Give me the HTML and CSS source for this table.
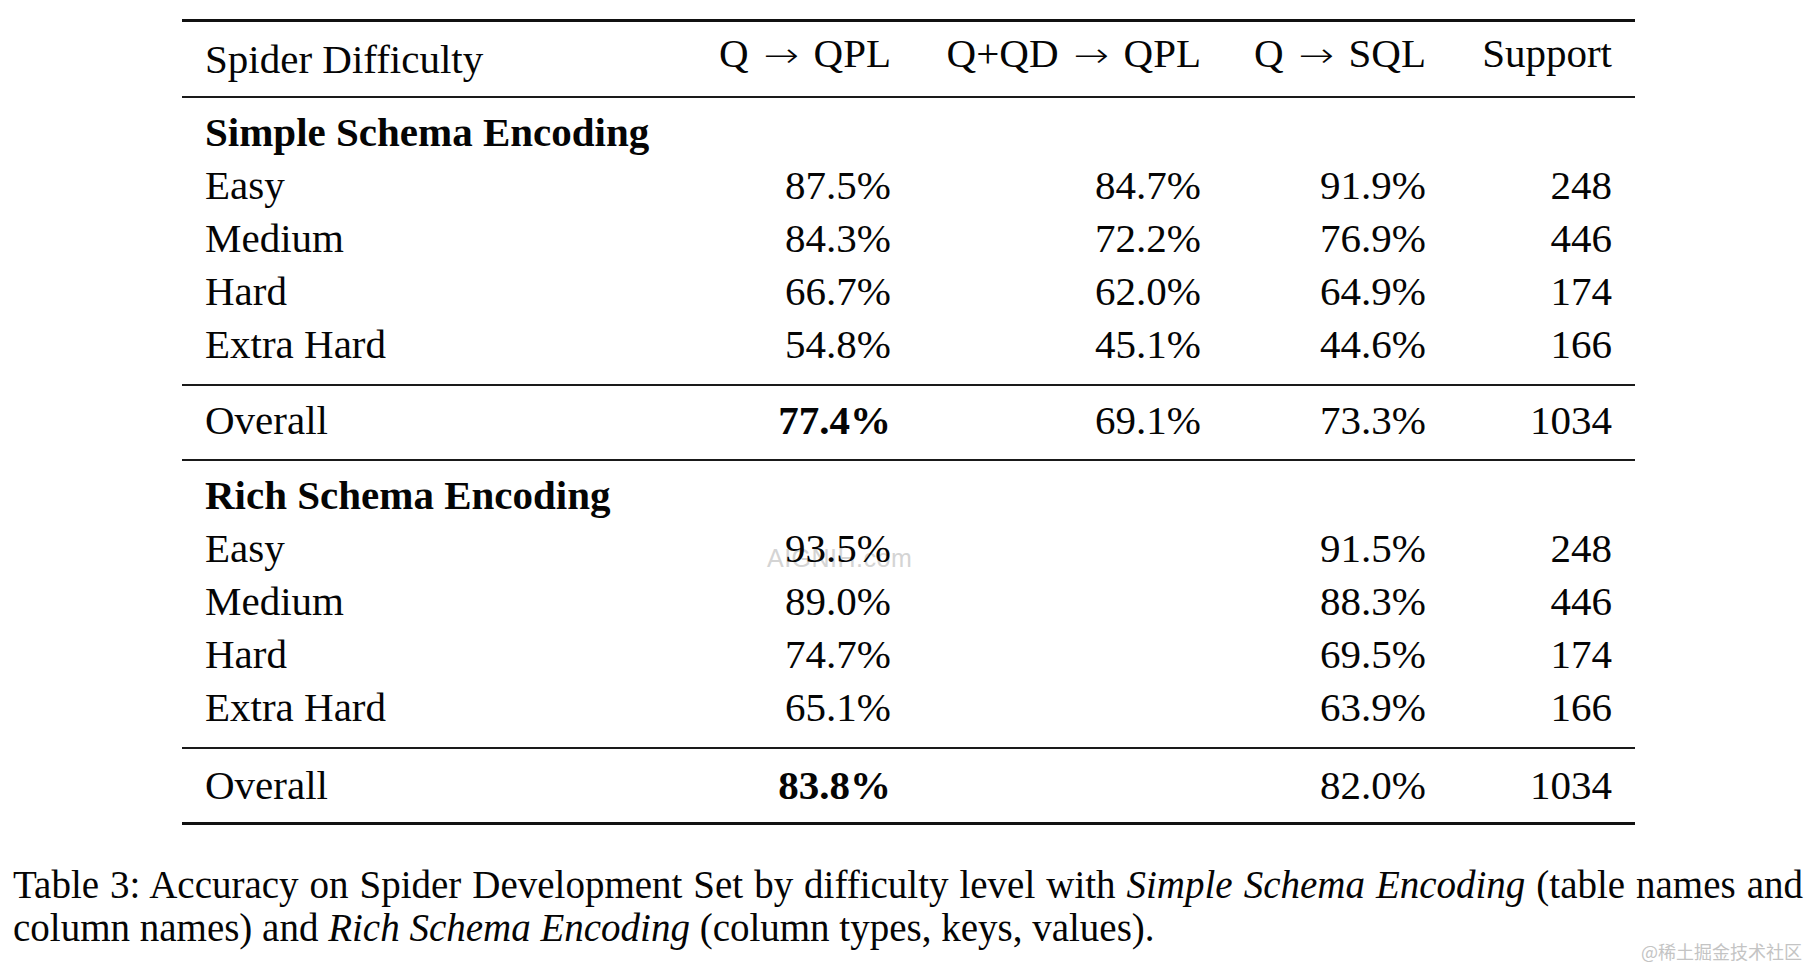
FILE: index.html
```html
<!DOCTYPE html>
<html lang="en">
<head>
<meta charset="utf-8">
<title>Table 3</title>
<link rel="stylesheet" href="styles.css">
</head>
<body>
<div class="page">
  <div class="table-wrap">
    <table class="results">
      <colgroup>
        <col class="c-name">
        <col class="c-qpl">
        <col class="c-qd">
        <col class="c-sql">
        <col class="c-sup">
      </colgroup>
      <thead>
        <tr>
          <th class="left">Spider Difficulty</th>
          <th>Q <span class="arrow">→</span> QPL</th>
          <th>Q+QD <span class="arrow">→</span> QPL</th>
          <th>Q <span class="arrow">→</span> SQL</th>
          <th>Support</th>
        </tr>
      </thead>
      <tbody class="group">
        <tr class="first"><td class="left section" colspan="5">Simple Schema Encoding</td></tr>
        <tr><td class="left">Easy</td><td>87.5%</td><td>84.7%</td><td>91.9%</td><td>248</td></tr>
        <tr><td class="left">Medium</td><td>84.3%</td><td>72.2%</td><td>76.9%</td><td>446</td></tr>
        <tr><td class="left">Hard</td><td>66.7%</td><td>62.0%</td><td>64.9%</td><td>174</td></tr>
        <tr class="last"><td class="left">Extra Hard</td><td>54.8%</td><td>45.1%</td><td>44.6%</td><td>166</td></tr>
      </tbody>
      <tbody class="total">
        <tr><td class="left">Overall</td><td><b>77.4%</b></td><td>69.1%</td><td>73.3%</td><td>1034</td></tr>
      </tbody>
      <tbody class="group">
        <tr class="first"><td class="left section" colspan="5">Rich Schema Encoding</td></tr>
        <tr><td class="left">Easy</td><td>93.5%</td><td></td><td>91.5%</td><td>248</td></tr>
        <tr><td class="left">Medium</td><td>89.0%</td><td></td><td>88.3%</td><td>446</td></tr>
        <tr><td class="left">Hard</td><td>74.7%</td><td></td><td>69.5%</td><td>174</td></tr>
        <tr class="last"><td class="left">Extra Hard</td><td>65.1%</td><td></td><td>63.9%</td><td>166</td></tr>
      </tbody>
      <tbody class="total final">
        <tr><td class="left">Overall</td><td><b>83.8%</b></td><td></td><td>82.0%</td><td>1034</td></tr>
      </tbody>
    </table>
    <span class="mark-center">AIGNIH.com</span>
  </div>
  <p class="caption">Table 3: Accuracy on Spider Development Set by difficulty level with <i>Simple Schema Encoding</i> (table names and column names) and <i>Rich Schema Encoding</i> (column types, keys, values).</p>
  <span class="mark-corner">@稀土掘金技术社区</span>
</div>
</body>
</html>
```
FILE: styles.css
```css
html {
  margin: 0;
  padding: 0;
  background: #ffffff;
}

body {
  margin: 0;
  padding: 0;
  width: 1808px;
  height: 968px;
  overflow: hidden;
  color: #050505;
  font-family: "Liberation Serif", "Times New Roman", serif;
}

.page {
  position: relative;
  width: 1808px;
  height: 968px;
}

.table-wrap {
  position: relative;
  padding: 19px 0 0 182px;
}

.results {
  width: 1453px;
  table-layout: fixed;
  border-collapse: collapse;
  border-top: 3px solid #111;
  border-bottom: 3px solid #111;
  font-size: 41px;
  line-height: 53px;
}

.c-name { width: 512px; }
.c-qpl { width: 220px; }
.c-qd { width: 310px; }
.c-sql { width: 225px; }
.c-sup { width: 186px; }

.results th,
.results td {
  padding: 0 23px 0 0;
  text-align: right;
  white-space: nowrap;
  font-weight: normal;
}

.results th.left,
.results td.left {
  padding: 0 0 0 23px;
  text-align: left;
}

.results th {
  padding-top: 5px;
  padding-bottom: 16px;
  border-bottom: 2px solid #1a1a1a;
}

.arrow {
  display: inline-block;
  margin: 0 8px;
  line-height: 1;
  font-family: "DejaVu Sans", sans-serif;
  font-weight: 200;
  font-size: 34px;
  transform: scaleX(1.25);
}

.results td.section {
  font-weight: bold;
}

.results tr.first td {
  padding-top: 8px;
}

.results tr.last td {
  padding-bottom: 13px;
}

.results tbody.group,
.results tbody.total {
  border-bottom: 2px solid #1a1a1a;
}

.results tbody.total td {
  padding-top: 8px;
  padding-bottom: 12px;
}

.results tbody.total.final td {
  padding-top: 10px;
  padding-bottom: 10px;
}

.results tbody.final {
  border-bottom: 3px solid #111;
}

.results b {
  font-weight: bold;
}

.caption {
  margin: 38px 5px 0 13px;
  font-size: 39px;
  line-height: 43px;
  text-align: justify;
}

.mark-center {
  position: absolute;
  left: 767px;
  top: 544px;
  z-index: -1;
  font-family: "Liberation Sans", Arial, sans-serif;
  font-size: 25px;
  color: #d4d4d4;
  letter-spacing: 0.5px;
}

.mark-corner {
  position: absolute;
  right: 6px;
  bottom: 4px;
  font-family: "Noto Sans CJK SC", "Liberation Sans", sans-serif;
  font-size: 18px;
  color: #c4c4c4;
}
```
